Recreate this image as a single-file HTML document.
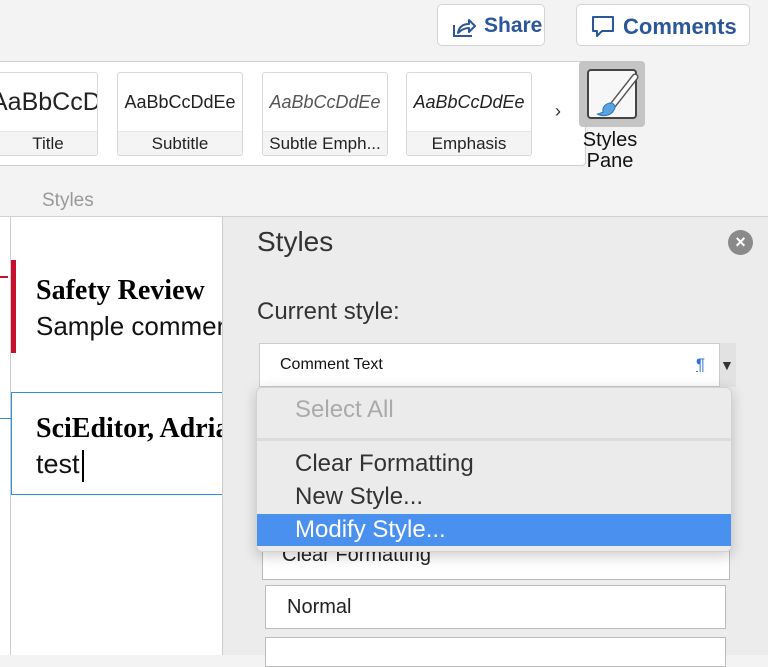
<!DOCTYPE html>
<html><head><meta charset="utf-8"><style>
*{margin:0;padding:0;box-sizing:border-box}
body{width:768px;height:655px;overflow:hidden;background:#f3f3f3;font-family:"Liberation Sans",sans-serif;position:relative}
.a{position:absolute;white-space:nowrap}
.btn{background:#fff;border:1px solid #d4d4d4;border-radius:5px;color:#2b579a;font-weight:bold;font-size:21px}
.gi{background:#fff;border:1px solid #d8d8d8;border-radius:3px;overflow:hidden}
.gi .t{height:58px;line-height:58px;text-align:center;font-size:18px;color:#222;white-space:nowrap}
.gi .l{height:26px;line-height:24px;text-align:center;font-size:17px;color:#222;background:#f4f4f4;border-top:1px solid #e6e6e6}
.serif{font-family:"Liberation Serif",serif;font-weight:bold;font-size:28px;color:#000}
</style></head><body>
<div class="a btn" style="left:437px;top:4px;width:108px;height:42px;">
<svg class="a" style="left:14px;top:11px" width="24" height="22" viewBox="0 0 24 22"><path d="M2 9v11h18" fill="none" stroke="#2b579a" stroke-width="2"/><path d="M6 17c1-6 5-9 11-9V4l6 6-6 6v-4c-5 0-8 2-11 5z" fill="none" stroke="#2b579a" stroke-width="2" stroke-linejoin="round"/></svg>
<span class="a" style="left:46px;top:9px">Share</span></div>
<div class="a btn" style="left:576px;top:4px;width:174px;height:42px;">
<svg class="a" style="left:14px;top:10px" width="24" height="24" viewBox="0 0 24 24"><path d="M2 2h20v14H11l-5 5v-5H2z" fill="none" stroke="#2b579a" stroke-width="2" stroke-linejoin="round"/></svg>
<span class="a" style="left:46px;top:9px;font-size:22px">Comments</span></div>

<div class="a" style="left:-5px;top:61px;width:591px;height:105px;background:#fff;border:1px solid #cfcfcf;border-radius:4px"></div>
<div class="a gi" style="left:-10px;top:72px;width:108px;height:84px"><div class="t" style="font-size:25px;text-align:right;padding-right:4px;overflow:hidden">AaBbCcDd</div><div class="l" style="padding-left:8px">Title</div></div>
<div class="a gi" style="left:117px;top:72px;width:126px;height:84px"><div class="t">AaBbCcDdEe</div><div class="l">Subtitle</div></div>
<div class="a gi" style="left:262px;top:72px;width:126px;height:84px"><div class="t" style="font-style:italic;color:#555">AaBbCcDdEe</div><div class="l">Subtle Emph...</div></div>
<div class="a gi" style="left:406px;top:72px;width:126px;height:84px"><div class="t" style="font-style:italic">AaBbCcDdEe</div><div class="l">Emphasis</div></div>
<div class="a" style="left:555px;top:101px;font-size:18px;color:#333">›</div>
<div class="a" style="left:579px;top:61px;width:66px;height:66px;background:#c4c4c4;border-radius:4px">
<svg class="a" style="left:6px;top:6px" width="56" height="56" viewBox="0 0 56 56"><rect x="3" y="3" width="48" height="48" rx="3" fill="#f7f7f7" stroke="#444" stroke-width="2"/><path d="M50 10 L28 38" stroke="#555" stroke-width="7" stroke-linecap="round"/><path d="M50 10 L28 38" stroke="#fff" stroke-width="4" stroke-linecap="round"/><path d="M26 36c-5 0-9 4-8 9-2 1-4 2-6 2 6 3 14 2 17-4 2-3 1-6-3-7z" fill="#5aa3e0" stroke="#2f78b8" stroke-width="1"/></svg></div>
<div class="a" style="left:576px;top:130px;width:68px;text-align:center;font-size:20px;line-height:21px;color:#111">Styles<br>Pane</div>
<div class="a" style="left:42px;top:190px;font-size:19px;color:#999">Styles</div>
<div class="a" style="left:0;top:216px;width:768px;height:1px;background:#d0d0d0"></div>

<div class="a" style="left:0;top:217px;width:222px;height:438px;background:#fff"></div>
<div class="a" style="left:10px;top:217px;width:1px;height:438px;background:#ccc"></div>
<div class="a" style="left:11px;top:260px;width:5px;height:93px;background:#c8102e"></div>
<div class="a" style="left:0;top:276px;width:8px;height:2px;border-top:2px dashed #c8102e"></div>
<div class="a serif" style="left:36px;top:275px">Safety Review</div>
<div class="a" style="left:36px;top:311px;font-size:26px;color:#111;width:186px;overflow:hidden">Sample comment</div>
<div class="a" style="left:11px;top:392px;width:212px;height:103px;border:1px solid #2f8fd8;border-right:none"></div>
<div class="a" style="left:0;top:418px;width:11px;height:1px;background:#2f8fd8"></div>
<div class="a serif" style="left:36px;top:413px;width:186px;overflow:hidden">SciEditor, Adrian</div>
<div class="a" style="left:36px;top:449px;font-size:27px;color:#111">test</div>
<div class="a" style="left:82px;top:450px;width:1.5px;height:32px;background:#000"></div>

<div class="a" style="left:222px;top:217px;width:546px;height:438px;background:#ececec;border-left:1px solid #ccc"></div>
<div class="a" style="left:257px;top:226px;font-size:28px;color:#333">Styles</div>
<div class="a" style="left:728px;top:230px;width:25px;height:25px;border-radius:50%;background:#8a8a8a;color:#fff;text-align:center;line-height:24px;font-size:18px;font-weight:bold">×</div>
<div class="a" style="left:257px;top:298px;font-size:24px;color:#333">Current style:</div>
<div class="a" style="left:259px;top:343px;width:461px;height:44px;background:#fff;border:1px solid #ccc"></div>
<div class="a" style="left:280px;top:356px;font-size:16px;color:#111">Comment Text</div>
<div class="a" style="left:696px;top:355px;font-size:17px;color:#2a6fd6;text-decoration:underline">¶</div>
<div class="a" style="left:720px;top:343px;width:16px;height:44px;background:#e2e2e2;font-size:14px;line-height:44px;color:#333">▼</div>

<div class="a" style="left:262px;top:523px;width:468px;height:57px;background:#fff;border:1px solid #bbb"></div>
<div class="a" style="left:282px;top:544px;font-size:20px;color:#222">Clear Formatting</div>
<div class="a" style="left:265px;top:585px;width:461px;height:44px;background:#fff;border:1px solid #bbb"></div>
<div class="a" style="left:287px;top:596px;font-size:20px;color:#222">Normal</div>
<div class="a" style="left:265px;top:637px;width:461px;height:30px;background:#fff;border:1px solid #bbb"></div>

<div class="a" style="left:256px;top:387px;width:476px;height:165px;background:#ebebeb;border:1px solid #d2d2d2;border-radius:6px;box-shadow:0 4px 14px rgba(0,0,0,.2);overflow:hidden">
<div class="a" style="left:38px;top:8px;font-size:24px;color:#aaa">Select All</div>
<div class="a" style="left:0;top:50px;width:476px;height:3px;background:#dcdcdc"></div>
<div class="a" style="left:38px;top:62px;font-size:24px;color:#333">Clear Formatting</div>
<div class="a" style="left:38px;top:95px;font-size:24px;color:#333">New Style...</div>
<div class="a" style="left:0;top:126px;width:476px;height:32px;background:#4a90ef"></div>
<div class="a" style="left:38px;top:128px;font-size:24px;color:#fff">Modify Style...</div>
</div>
</body></html>
